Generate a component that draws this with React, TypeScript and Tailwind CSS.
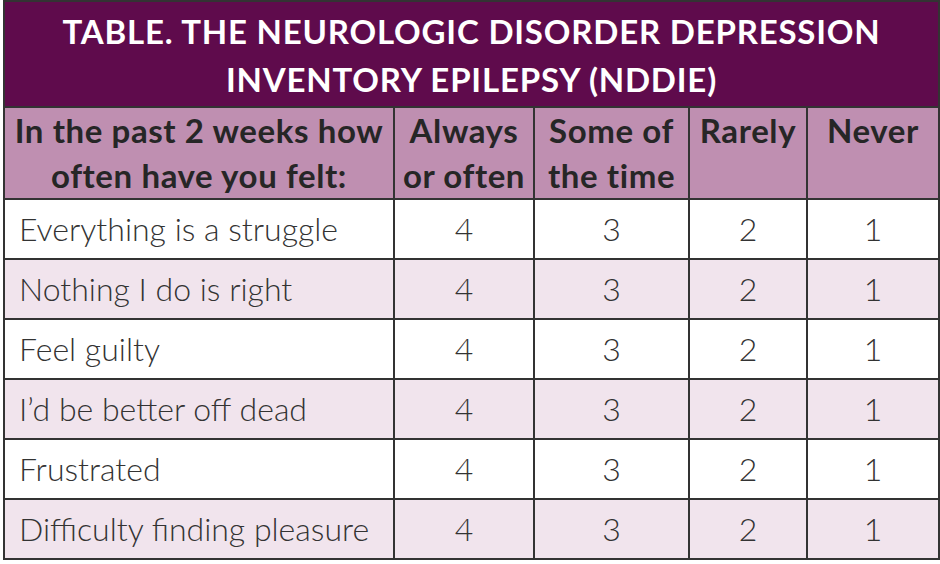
import React from "react";

const rows = [
  "Everything is a struggle",
  "Nothing I do is right",
  "Feel guilty",
  "I\u2019d be better off dead",
  "Frustrated",
  "Difficulty finding pleasure",
];

export default function App() {
  return (
    <div className="w-[940px] h-[564px] bg-white pl-[3px] pt-0" style={{ fontFamily: "Lato, 'Open Sans', sans-serif" }}>
      <table className="w-[935px] border-collapse table-fixed border-2 border-[#333333]">
        <colgroup>
          <col className="w-[390px]" />
          <col className="w-[140px]" />
          <col className="w-[155px]" />
          <col className="w-[118px]" />
          <col className="w-[132px]" />
        </colgroup>
        <thead>
          <tr className="h-[106px] bg-[#5f0b4c]">
            <th colSpan={5} className="border-2 border-[#333333] text-white font-bold text-[33px] leading-[48px] tracking-[0.8px] text-center align-top p-0 pt-[5px]">
              TABLE. THE NEUROLOGIC DISORDER DEPRESSION
              <br />
              INVENTORY EPILEPSY (NDDIE)
            </th>
          </tr>
          <tr className="h-[89px] bg-[#bf8fb1] text-[#262626] font-bold text-[33px] leading-[45px] tracking-[0.6px]">
            <th className="border-2 border-[#333333] text-center align-top p-0">
              In the past 2 weeks how
              <br />
              often have you felt:
            </th>
            <th className="border-2 border-[#333333] text-center align-top p-0">
              Always
              <br />
              or often
            </th>
            <th className="border-2 border-[#333333] text-center align-top p-0">
              Some of
              <br />
              the time
            </th>
            <th className="border-2 border-[#333333] text-center align-top p-0">Rarely</th>
            <th className="border-2 border-[#333333] text-center align-top p-0">Never</th>
          </tr>
        </thead>
        <tbody>
          {rows.map((r, i) => (
            <tr key={r} className={`h-[60px] text-[#333333] text-[32px] font-light ${i % 2 === 1 ? "bg-[#f1e4ed]" : "bg-white"}`}>
              <td className="border-2 border-[#333333] p-0 pl-[14px]">{r}</td>
              <td className="border-2 border-[#333333] text-center p-0">4</td>
              <td className="border-2 border-[#333333] text-center p-0">3</td>
              <td className="border-2 border-[#333333] text-center p-0">2</td>
              <td className="border-2 border-[#333333] text-center p-0">1</td>
            </tr>
          ))}
        </tbody>
      </table>
    </div>
  );
}
